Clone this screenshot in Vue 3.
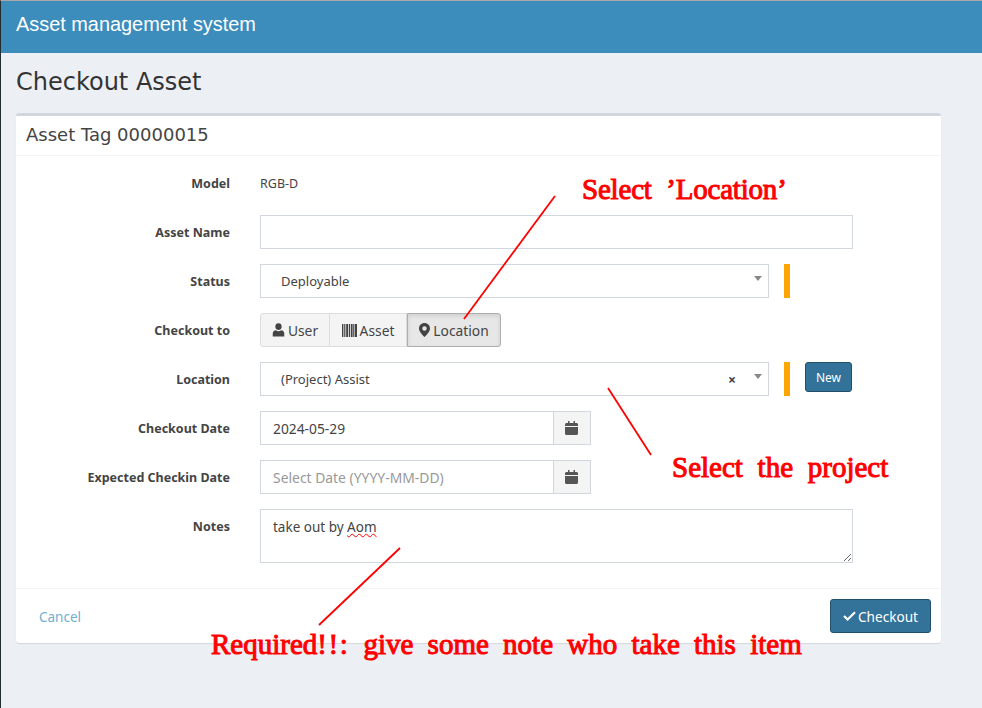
<template>
  <div class="page">
    <header class="topbar">Asset management system</header>

    <main class="content">
      <h1 class="page-title">Checkout Asset</h1>

      <section class="box">
        <div class="box-header">Asset Tag 00000015</div>

        <div class="box-body">
          <div class="row">
            <label>Model</label>
            <div class="static-value">RGB-D</div>
          </div>

          <div class="row">
            <label>Asset Name</label>
            <div class="field field-wide"></div>
          </div>

          <div class="row">
            <label>Status</label>
            <div class="field field-select">
              <span class="select-text">Deployable</span>
              <span class="select-arrow"></span>
            </div>
            <span class="required-bar"></span>
          </div>

          <div class="row">
            <label>Checkout to</label>
            <div class="btn-group">
              <button class="toggle toggle-user">
                <svg width="13" height="14" viewBox="0 0 14 14" preserveAspectRatio="none" fill="currentColor">
                  <circle cx="7" cy="3.6" r="3.4" />
                  <path d="M0.8 13.6V10.6C0.8 8.6 2.2 7.2 4 7.2C5 7.9 6 8.2 7 8.2C8 8.2 9 7.9 10 7.2C11.8 7.2 13.2 8.6 13.2 10.6V13.6Z" />
                </svg>
                User
              </button>
              <button class="toggle toggle-asset">
                <svg width="15" height="13" viewBox="0 0 15 13" fill="currentColor">
                  <rect x="0" y="0" width="1.4" height="13" />
                  <rect x="2.2" y="0" width="1.2" height="13" />
                  <rect x="4.2" y="0" width="1.8" height="13" />
                  <rect x="6.8" y="0" width="1.2" height="13" />
                  <rect x="8.8" y="0" width="1.8" height="13" />
                  <rect x="11.2" y="0" width="1.2" height="13" />
                  <rect x="13" y="0" width="2" height="13" />
                </svg>
                Asset
              </button>
              <button class="toggle toggle-location active">
                <svg width="11" height="14" viewBox="0 0 11 14" fill="currentColor">
                  <path fill-rule="evenodd" d="M5.5 0C8.5 0 11 2.4 11 5.4C11 8.4 7.6 11.8 5.5 14C3.4 11.8 0 8.4 0 5.4C0 2.4 2.5 0 5.5 0ZM5.5 3.3A2.2 2.2 0 1 0 5.5 7.7A2.2 2.2 0 1 0 5.5 3.3Z" />
                </svg>
                Location
              </button>
            </div>
          </div>

          <div class="row">
            <label>Location</label>
            <div class="field field-select">
              <span class="select-text">(Project) Assist</span>
              <span class="select-clear">×</span>
              <span class="select-arrow"></span>
            </div>
            <span class="required-bar"></span>
            <button class="btn btn-new">New</button>
          </div>

          <div class="row">
            <label>Checkout Date</label>
            <div class="date-group">
              <div class="date-input">2024-05-29</div>
              <div class="date-addon">
                <svg width="13" height="14" viewBox="0 0 13 14" fill="currentColor">
                  <path d="M3 0H4.5V2H8.5V0H10V2H11.5C12.3 2 13 2.7 13 3.5V5H0V3.5C0 2.7 0.7 2 1.5 2H3ZM0 6H13V12.5C13 13.3 12.3 14 11.5 14H1.5C0.7 14 0 13.3 0 12.5Z" />
                </svg>
              </div>
            </div>
          </div>

          <div class="row">
            <label>Expected Checkin Date</label>
            <div class="date-group">
              <div class="date-input placeholder">Select Date (YYYY-MM-DD)</div>
              <div class="date-addon">
                <svg width="13" height="14" viewBox="0 0 13 14" fill="currentColor">
                  <path d="M3 0H4.5V2H8.5V0H10V2H11.5C12.3 2 13 2.7 13 3.5V5H0V3.5C0 2.7 0.7 2 1.5 2H3ZM0 6H13V12.5C13 13.3 12.3 14 11.5 14H1.5C0.7 14 0 13.3 0 12.5Z" />
                </svg>
              </div>
            </div>
          </div>

          <div class="row row-last">
            <label>Notes</label>
            <div class="notes">take out by <span class="misspelled">Aom</span></div>
          </div>
        </div>

        <div class="box-footer">
          <a class="cancel">Cancel</a>
          <button class="btn btn-checkout">
            <svg width="13" height="10" viewBox="0 0 13 10" fill="none" stroke="currentColor" stroke-width="2.2">
              <path d="M1 5L4.6 8.5L12 1.2" />
            </svg>
            Checkout
          </button>
        </div>
      </section>
    </main>

    <!-- red notes drawn on top of the screenshot -->
    <svg class="notes-lines" width="982" height="708" viewBox="0 0 982 708" stroke="#ff0000" stroke-width="1.8">
      <line x1="555" y1="196" x2="464" y2="319" />
      <line x1="608" y1="388" x2="651" y2="455" />
      <line x1="400" y1="548" x2="319" y2="625" />
    </svg>
    <div class="note note-location">Select ’Location’</div>
    <div class="note note-project">Select the project</div>
    <div class="note note-required">Required<span class="bangs">!!:</span> give some note who take this item</div>
  </div>
</template>

<script setup>
</script>

<style>
html, body {
  margin: 0;
  background: #ecf0f5;
}
</style>

<style scoped>
.page {
  position: relative;
  width: 982px;
  height: 708px;
  box-sizing: border-box;
  overflow: hidden;
  background: #ecf0f5;
  border-left: 1px solid #222d32;
  border-top: 1px solid #a8a8a8;
  font-family: "Noto Sans", sans-serif;
  font-size: 14px;
  color: #444;
}

.topbar {
  height: 52px;
  box-sizing: border-box;
  padding: 11px 15px 0;
  background: #3c8dbc;
  color: #fff;
  font-family: "Liberation Sans", sans-serif;
  font-size: 19.9px;
  line-height: 24px;
}

.content {
  padding: 15px 15px 0;
}

.page-title {
  margin: 0 0 17px;
  font-family: "DejaVu Sans", sans-serif;
  font-size: 24px;
  font-weight: 400;
  line-height: 28px;
  color: #333;
}

.box {
  width: 925px;
  height: 530px;
  box-sizing: border-box;
  background: #fff;
  border-top: 3px solid #d2d6de;
  border-radius: 3px;
  box-shadow: 0 1px 1px rgba(0, 0, 0, 0.1);
  display: flex;
  flex-direction: column;
}

.box-header {
  height: 40px;
  box-sizing: border-box;
  padding: 6px 10px 0;
  border-bottom: 1px solid #f4f4f4;
  font-family: "DejaVu Sans", sans-serif;
  font-size: 18px;
  line-height: 25px;
}

.box-body {
  flex: 1;
  padding-top: 10px;
}

.row {
  display: flex;
  align-items: flex-start;
  height: 34px;
  margin-bottom: 15px;
}

.row-last {
  height: 54px;
  margin-bottom: 0;
}

.row label {
  width: 214px;
  margin-right: 30px;
  flex-shrink: 0;
  padding-top: 8px;
  text-align: right;
  font-family: "Noto Sans", sans-serif;
  font-size: 12.5px;
  font-weight: 700;
  line-height: 20px;
  color: #444;
}

.static-value {
  padding-top: 8px;
  font-size: 12.5px;
  line-height: 20px;
}

.field {
  height: 34px;
  box-sizing: border-box;
  background: #fff;
  border: 1px solid #d2d6de;
}

.field-wide {
  width: 593px;
}

.field-select {
  position: relative;
  width: 509px;
  padding: 6px 20px;
  line-height: 20px;
  font-size: 13px;
}

.select-text {
  color: #444;
}

.select-arrow {
  position: absolute;
  right: 6px;
  top: 11px;
  width: 0;
  height: 0;
  border-left: 4px solid transparent;
  border-right: 4px solid transparent;
  border-top: 5px solid #888;
}

.select-clear {
  position: absolute;
  right: 32px;
  top: 7px;
  font-size: 14px;
  font-weight: 700;
  line-height: 20px;
  color: #444;
}

.required-bar {
  width: 6px;
  height: 34px;
  margin-left: 15px;
  background: #ffa500;
}

.btn-group {
  display: flex;
  height: 34px;
}

.toggle {
  display: flex;
  align-items: center;
  justify-content: center;
  gap: 3px;
  height: 34px;
  box-sizing: border-box;
  padding: 0;
  background: #f4f4f4;
  border: 1px solid #ddd;
  border-left: none;
  color: #444;
  font-family: "Noto Sans", sans-serif;
  font-size: 13.8px;
}

.toggle-user {
  width: 70px;
  border-left: 1px solid #ddd;
  border-radius: 3px 0 0 3px;
}

.toggle-asset {
  width: 77px;
}

.toggle-location {
  width: 94px;
  border-radius: 0 3px 3px 0;
}

.toggle.active {
  background: #e7e7e7;
  border: 1px solid #adadad;
  box-shadow: inset 0 2px 4px rgba(0, 0, 0, 0.1);
}

.btn {
  box-sizing: border-box;
  background: #337299;
  border: 1px solid #244f6b;
  border-radius: 3px;
  color: #fff;
  font-family: "Noto Sans", sans-serif;
}

.btn-new {
  width: 47px;
  height: 30px;
  margin-left: 15px;
  padding: 0;
  font-size: 12px;
}

.date-group {
  display: flex;
  width: 331px;
  height: 34px;
}

.date-input {
  flex: 1;
  box-sizing: border-box;
  padding: 7px 12px 5px;
  border: 1px solid #d2d6de;
  border-right: none;
  line-height: 20px;
  font-size: 13.8px;
}

.date-input.placeholder {
  color: #999;
  font-size: 13.9px;
}

.date-addon {
  display: flex;
  align-items: center;
  justify-content: center;
  width: 38px;
  box-sizing: border-box;
  padding-right: 1px;
  background: #f4f4f4;
  border: 1px solid #d2d6de;
  color: #555;
}

.notes {
  width: 593px;
  height: 54px;
  box-sizing: border-box;
  padding: 7px 12px 5px;
  border: 1px solid #d2d6de;
  line-height: 20px;
  font-size: 13.5px;
  overflow: auto;
  resize: both;
}

.misspelled {
  text-decoration: underline wavy #ff0000 1px;
}

.box-footer {
  display: flex;
  align-items: center;
  justify-content: space-between;
  height: 55px;
  box-sizing: border-box;
  padding: 0 10px 0 23px;
  border-top: 1px solid #f4f4f4;
}

.cancel {
  padding-top: 2px;
  font-size: 13.5px;
  color: #72afd2;
}

.btn-checkout {
  display: flex;
  align-items: center;
  justify-content: center;
  gap: 2px;
  width: 101px;
  height: 34px;
  padding: 0;
  font-size: 13.6px;
}

.notes-lines {
  position: absolute;
  left: -1px;
  top: -1px;
  pointer-events: none;
}

.note {
  position: absolute;
  white-space: nowrap;
  font-family: "Liberation Serif", serif;
  font-size: 29px;
  font-weight: 400;
  line-height: 32px;
  word-spacing: 7.5px;
  -webkit-text-stroke: 1px #ff0000;
  color: #ff0000;
}

.note-location {
  left: 581px;
  top: 172px;
  letter-spacing: -0.2px;
}

.note-project {
  left: 671px;
  top: 450px;
}

.note-required {
  left: 210px;
  top: 627px;
  word-spacing: 7px;
}

.bangs {
  letter-spacing: 1.5px;
}
</style>
